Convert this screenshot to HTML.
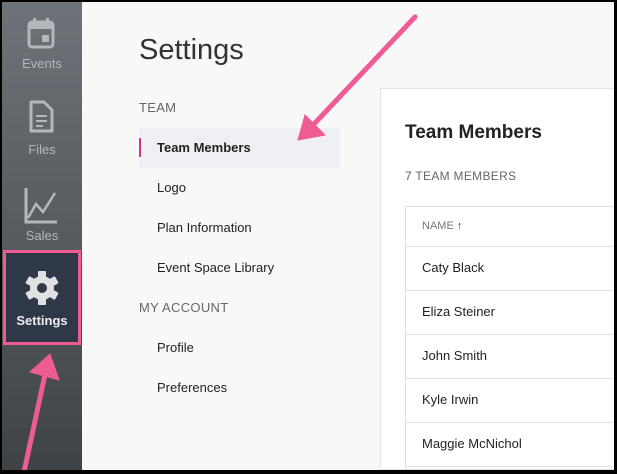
<!DOCTYPE html>
<html><head><style>
*{margin:0;padding:0;box-sizing:border-box}
html,body{width:617px;height:474px;overflow:hidden}
body{background:#000;font-family:"Liberation Sans",sans-serif;position:relative}
#wrap{position:absolute;left:2px;top:2px;width:612px;height:468px;background:#f8f8f8;overflow:hidden}
#side{position:absolute;left:0;top:0;width:80px;height:468px;background:linear-gradient(#6d7378,#3f4346)}
.lbl{position:absolute;left:0;width:80px;text-align:center;color:#b3b8bd;font-size:13px}
.t{position:absolute;font-size:13px;color:#222}
.h{position:absolute;font-size:13px;color:#666;letter-spacing:.3px}
#card{position:absolute;left:378px;top:86px;width:240px;height:382px;background:#fff;border:1px solid #e4e4e4}
#tbl{position:absolute;left:403px;top:204px;width:220px;height:264px;border:1px solid #dedede;background:#fff;overflow:hidden}
.row{position:absolute;left:0;width:220px;border-top:1px solid #e2e2e2;font-size:13px;color:#222;padding-left:16px}
</style></head><body>
<div id="wrap">
<div id="side">
<svg style="position:absolute;left:25px;top:15px" width="28" height="32" viewBox="0 0 28 32"><rect x="2" y="5" width="24" height="25" rx="3" fill="none" stroke="#b3b8bd" stroke-width="3"/><rect x="2" y="5" width="24" height="7" fill="#b3b8bd"/><rect x="6" y="1" width="3" height="6" fill="#b3b8bd"/><rect x="19" y="1" width="3" height="6" fill="#b3b8bd"/><rect x="15" y="18" width="7" height="7" fill="#b3b8bd"/></svg>
<div class="lbl" style="top:54px">Events</div>
<svg style="position:absolute;left:26px;top:98px" width="26" height="34" viewBox="0 0 26 34"><path d="M3 2H16L24 10V31H3Z" fill="none" stroke="#b3b8bd" stroke-width="3" stroke-linejoin="round"/><path d="M8 16H19M8 21H19M8 26H15" stroke="#b3b8bd" stroke-width="2"/></svg>
<div class="lbl" style="top:140px">Files</div>
<svg style="position:absolute;left:22px;top:186px" width="34" height="36" viewBox="0 0 34 36"><path d="M2 0V34H33" fill="none" stroke="#b3b8bd" stroke-width="3"/><path d="M4 30L12 16L19 24L31 5" fill="none" stroke="#b3b8bd" stroke-width="2.5"/></svg>
<div class="lbl" style="top:226px">Sales</div>
<div style="position:absolute;left:1px;top:248px;width:78px;height:95px;background:#2e3846;border:3px solid #ee5a91"></div>
<svg style="position:absolute;left:22px;top:268px" width="36" height="36" viewBox="-18 -18 36 36"><g fill="#dfe1e3"><circle r="12"/><g id="tth"><rect x="-4" y="-17" width="8" height="8" rx="1"/></g><use href="#tth" transform="rotate(60)"/><use href="#tth" transform="rotate(120)"/><use href="#tth" transform="rotate(180)"/><use href="#tth" transform="rotate(240)"/><use href="#tth" transform="rotate(300)"/></g><circle r="5" fill="#2e3846"/></svg>
<div class="lbl" style="top:311px;color:#eceef0;font-weight:bold;font-size:13px">Settings</div>
</div>
<div style="position:absolute;left:137px;top:32px;font-size:29px;color:#333">Settings</div>
<div class="h" style="left:137px;top:98px">TEAM</div>
<div style="position:absolute;left:137px;top:126px;width:201px;height:40px;background:#eef0f4"></div>
<div style="position:absolute;left:137px;top:136px;width:2px;height:19px;background:#d23a73"></div>
<div class="t" style="left:155px;top:138px;font-weight:bold">Team Members</div>
<div class="t" style="left:155px;top:178px">Logo</div>
<div class="t" style="left:155px;top:218px">Plan Information</div>
<div class="t" style="left:155px;top:258px">Event Space Library</div>
<div class="h" style="left:137px;top:298px">MY ACCOUNT</div>
<div class="t" style="left:155px;top:338px">Profile</div>
<div class="t" style="left:155px;top:378px">Preferences</div>
<div id="card"></div>
<div style="position:absolute;left:403px;top:120px;font-size:19px;font-weight:bold;color:#222">Team Members</div>
<div class="h" style="left:403px;top:167px;font-size:12px">7 TEAM MEMBERS</div>
<div id="tbl">
<div style="position:absolute;left:16px;top:13px;font-size:11px;color:#777">NAME <span style="color:#2f3d63">&#8593;</span></div>
<div class="row" style="top:39px;height:44px;line-height:42px">Caty Black</div>
<div class="row" style="top:83px;height:44px;line-height:42px">Eliza Steiner</div>
<div class="row" style="top:127px;height:44px;line-height:42px">John Smith</div>
<div class="row" style="top:171px;height:44px;line-height:42px">Kyle Irwin</div>
<div class="row" style="top:215px;height:44px;line-height:42px">Maggie McNichol</div>
<div class="row" style="top:259px;height:4px"></div>
</div>
<svg style="position:absolute;left:0;top:0" width="612" height="468"><g fill="#ef5b93" stroke="#ef5b93" stroke-linecap="round"><line x1="413" y1="15" x2="312" y2="122" stroke-width="5"/><polygon points="296,138 303,113 323,133"/><line x1="22" y1="470" x2="44" y2="368" stroke-width="5"/><polygon points="48,352 28,370 57,378"/></g></svg>
</div>
</body></html>
